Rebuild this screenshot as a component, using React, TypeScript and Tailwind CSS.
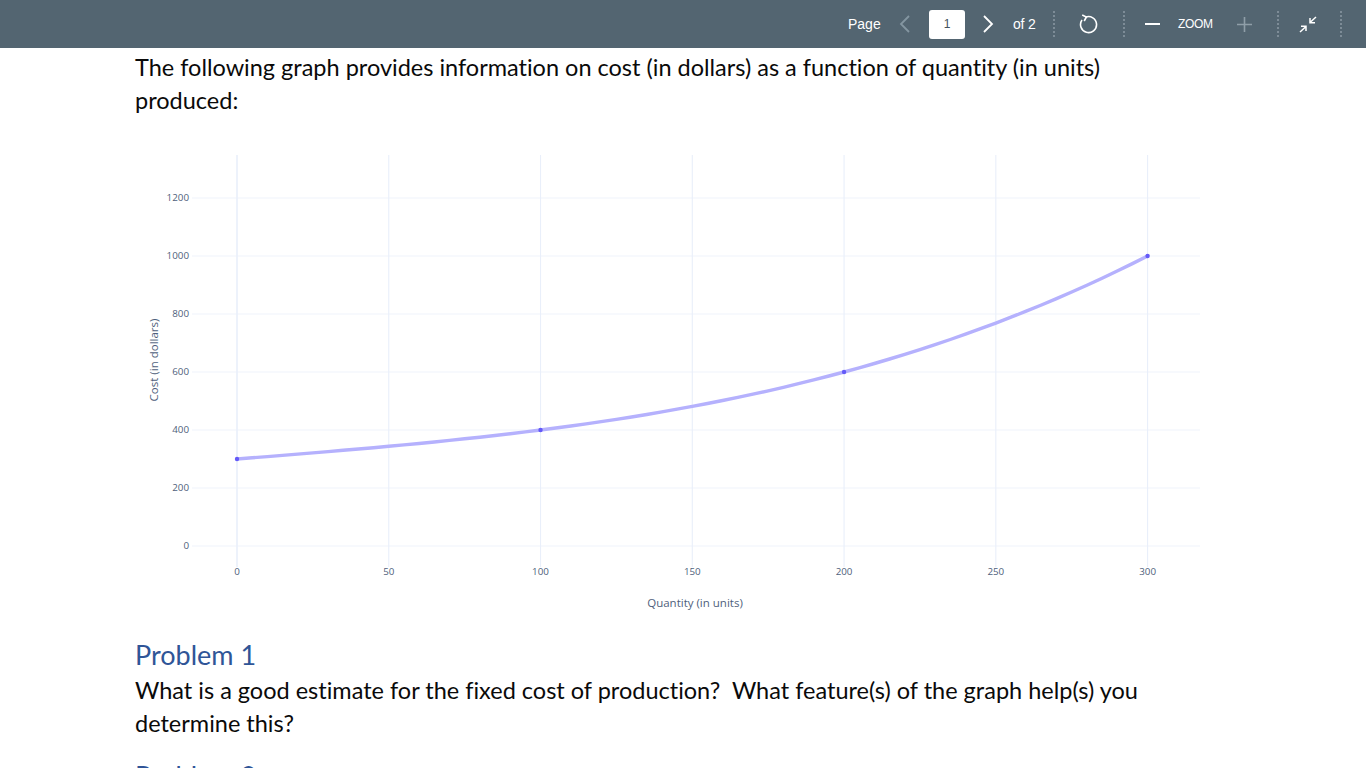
const xs = [0, 50, 100, 150, 200, 250, 300];
const ys = [0, 200, 400, 600, 800, 1000, 1200];
const px = (q: number) => 237 + q * 3.0353 - 120;
const py = (c: number) => 546 - c * 0.29 - 140;
const cost = (q: number) => {
  const t = q / 100;
  return 300 + 100 * t + 50 * t * (t - 1) + (100 / 6) * t * (t - 1) * (t - 2);
};
const curve = Array.from({ length: 61 }, (_, i) => i * 5)
  .map((q, i) => `${i === 0 ? "M" : "L"}${px(q).toFixed(1)} ${py(cost(q)).toFixed(1)}`)
  .join(" ");

function Divider() {
  return <div className="h-[26px] w-0 border-l-2 border-dotted border-[#7d8c97]" />;
}

function Header() {
  return (
    <header className="flex h-12 items-center bg-[#536571] pl-[848px] font-['Liberation_Sans',sans-serif] text-white">
      <span className="w-[32px] text-[14px]">Page</span>
      <svg className="ml-[19px] h-[18px] w-[11px]" viewBox="0 0 11 18" fill="none" stroke="#8496a1" strokeWidth="1.8">
        <path d="M10 1 L2 9 L10 17" />
      </svg>
      <div className="ml-[19px] flex h-[29px] w-9 items-center justify-center rounded-[3px] bg-white text-[12px] text-[#44535e]">1</div>
      <svg className="ml-[18px] h-[18px] w-[11px]" viewBox="0 0 11 18" fill="none" stroke="#ffffff" strokeWidth="1.8">
        <path d="M1 1 L9 9 L1 17" />
      </svg>
      <span className="ml-[19px] w-[24px] whitespace-nowrap text-[14px] tracking-[-0.2px]">of 2</span>
      <div className="ml-4"><Divider /></div>
      <svg className="ml-[24px] h-5 w-5" viewBox="0 0 20 20" fill="none" stroke="#ffffff" strokeWidth="1.6">
        <path d="M6.5 3.2 A8 8 0 1 1 3 6" />
        <path d="M3.2 1 L7.4 3 L5.2 7" />
      </svg>
      <div className="ml-[24px]"><Divider /></div>
      <div className="ml-[20px] h-[2px] w-[15px] bg-white" />
      <span className="ml-[18px] w-[37px] text-[12px] tracking-[-0.3px]">ZOOM</span>
      <svg className="ml-[22px] h-[15px] w-[15px]" viewBox="0 0 15 15" stroke="#8f9ea8" strokeWidth="1.6">
        <path d="M0 7.5 H15 M7.5 0 V15" />
      </svg>
      <div className="ml-[25px]"><Divider /></div>
      <svg className="ml-[20px] h-[17px] w-[18px]" viewBox="0 0 18 17" fill="none" stroke="#ffffff" strokeWidth="1.5">
        <path d="M17 1 L11 6.5 M11 2 V6.8 H16" />
        <path d="M1 16 L7 10.5 M2 10.2 H7 V15" />
      </svg>
      <div className="ml-[23px]"><Divider /></div>
    </header>
  );
}

function Chart() {
  return (
    <svg className="mb-[16px] ml-[-15px] mt-[23px] block h-[480px] w-[1120px]" viewBox="0 0 1120 480">
      {ys.map((c) => (
        <line key={c} x1="72" x2="1080" y1={py(c)} y2={py(c)} stroke="#f0f4fc" strokeWidth="1.2" />
      ))}
      {xs.map((q) => (
        <line key={q} x1={px(q)} x2={px(q)} y1="15" y2="427" stroke="#e9effa" strokeWidth={q === 0 ? 1.6 : 1.1} />
      ))}
      <path d={curve} fill="none" stroke="#b5b1fd" strokeWidth="3.4" />
      {[0, 100, 200, 300].map((q) => (
        <circle key={q} cx={px(q)} cy={py(cost(q))} r="2.2" fill="#645af8" />
      ))}
      <g fontFamily="'Open Sans', sans-serif" fontSize="9.8" fill="#4f5f7c">
        {ys.map((c) => (
          <text key={c} x="69" y={py(c) + 3} textAnchor="end">{c}</text>
        ))}
        {xs.map((q) => (
          <text key={q} x={px(q)} y="435" textAnchor="middle">{q}</text>
        ))}
        <text x="575" y="467" textAnchor="middle" fontSize="11.5">Quantity (in units)</text>
        <text transform="translate(38 220) rotate(-90)" textAnchor="middle" fontSize="11.5">Cost (in dollars)</text>
      </g>
    </svg>
  );
}

export default function App() {
  return (
    <div className="h-[768px] w-[1366px] overflow-hidden bg-white">
      <Header />
      <main className="pl-[135px] pt-[3px] font-['Lato',sans-serif] text-[23.5px] leading-[33px] text-[#0a0a0a] [font-variant-ligatures:none]">
        <p className="w-[1000px]">The following graph provides information on cost (in dollars) as a function of quantity (in units) produced:</p>
        <Chart />
        <h2 className="text-[27px] leading-[38px] text-[#2f5597]">Problem 1</h2>
        <p className="w-[1030px]">What is a good estimate for the fixed cost of production?&nbsp; What feature(s) of the graph help(s) you determine this?</p>
        <h2 className="mt-[18px] text-[27px] leading-[36px] text-[#2f5597]">Problem 2</h2>
      </main>
    </div>
  );
}
